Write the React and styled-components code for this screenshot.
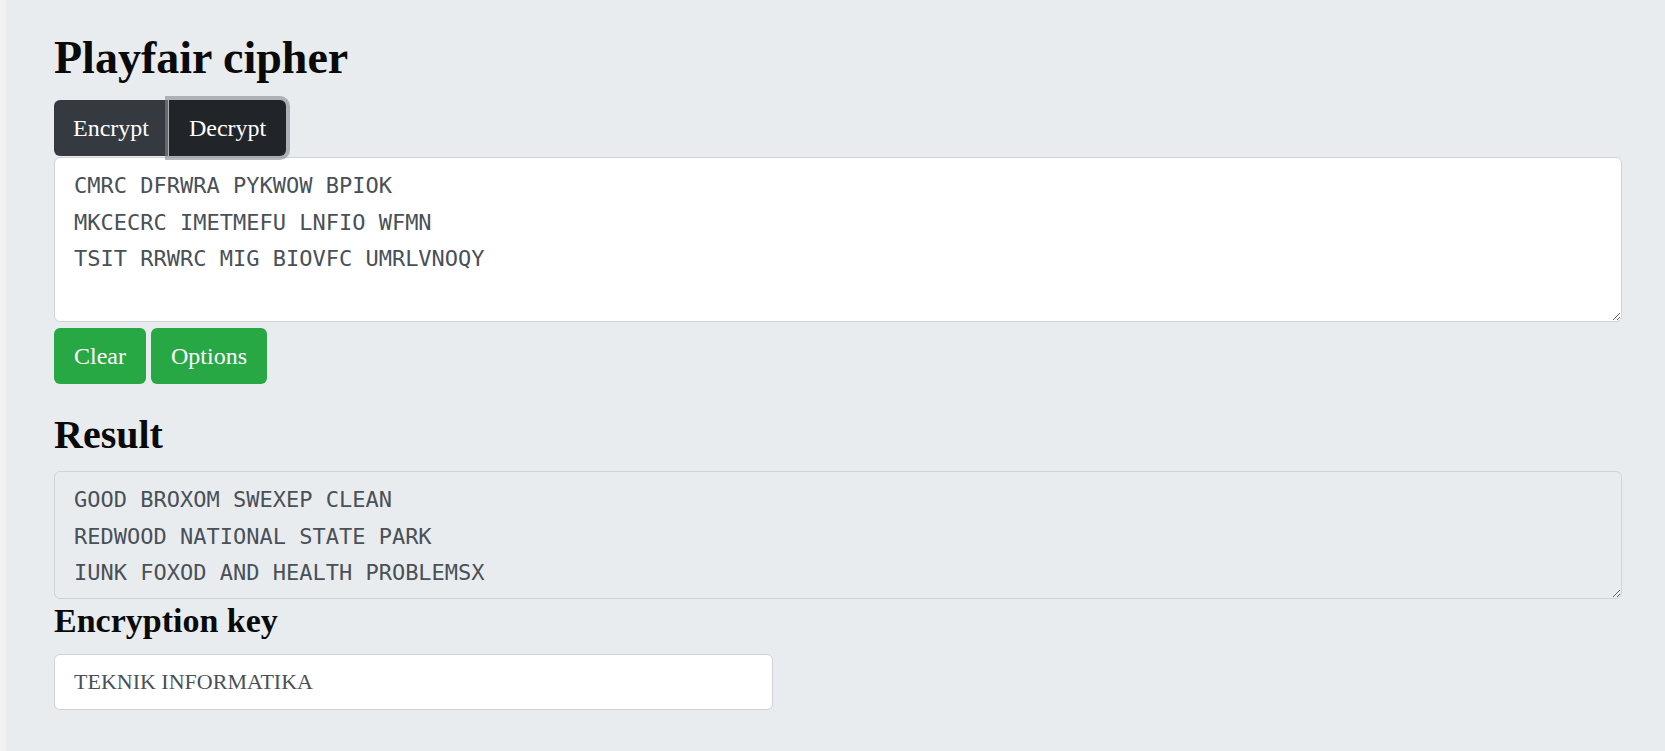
import React, { useState } from "react";
import styled, { createGlobalStyle } from "styled-components";

const GlobalStyles = createGlobalStyle`
  html, body {
    margin: 0;
    padding: 0;
    background: #e9ecef;
  }
  body {
    font-family: "Liberation Serif", "Times New Roman", serif;
    color: #212529;
  }
`;

const Page = styled.div`
  min-height: 751px;
  box-sizing: border-box;
  border-left: 6px solid #f2f2f3;
  padding: 30px 43px 0 48px;
`;

const Title = styled.h1`
  margin: 0 0 15px;
  font-size: 46px;
  line-height: 1.2;
  font-weight: 700;
  color: #0a0a0a;
`;

const SubTitle = styled.h2`
  margin: ${(p) => p.$margin};
  font-size: ${(p) => p.$size}px;
  line-height: 1.2;
  font-weight: 700;
  color: #0a0a0a;
`;

const ButtonGroup = styled.div`
  display: flex;
`;

const ModeButton = styled.button`
  position: relative;
  height: 56px;
  padding: 0 ${(p) => (p.$active ? 20 : 19)}px;
  border: none;
  font-family: inherit;
  font-size: 24px;
  line-height: 1.5;
  color: #fff;
  background: ${(p) => (p.$active ? "#212529" : "#343a40")};
  box-shadow: ${(p) => (p.$active ? "0 0 0 4px rgba(130, 138, 145, 0.6)" : "none")};
  z-index: ${(p) => (p.$active ? 2 : 1)};
  cursor: pointer;

  &:first-child {
    border-radius: 6px 0 0 6px;
  }
  &:last-child {
    border-radius: 0 6px 6px 0;
    margin-left: 1px;
  }
`;

const TextBox = styled.textarea`
  display: block;
  width: 100%;
  height: ${(p) => p.$height}px;
  box-sizing: border-box;
  margin: ${(p) => p.$margin || "0"};
  padding: 10px 19px;
  border: 1px solid #ced4da;
  border-radius: 6px;
  background: ${(p) => (p.readOnly ? "#e9ecef" : "#fff")};
  font-family: "DejaVu Sans Mono", "Liberation Mono", monospace;
  font-size: 22px;
  line-height: 36.6px;
  color: #495057;
  outline: none;
  overflow: hidden;
`;

const ActionRow = styled.div`
  display: flex;
  gap: 5px;
  margin-top: 6px;
`;

const ActionButton = styled.button`
  height: 56px;
  padding: 0 20px;
  border: none;
  border-radius: 6px;
  background: #28a745;
  color: #fff;
  font-family: inherit;
  font-size: 24px;
  line-height: 1.5;
  cursor: pointer;
`;

const KeyInput = styled.input`
  display: block;
  width: 719px;
  height: 56px;
  box-sizing: border-box;
  padding: 0 19px;
  border: 1px solid #ced4da;
  border-radius: 6px;
  background: #fff;
  font-family: "Liberation Serif", "Times New Roman", serif;
  font-size: 22px;
  color: #495057;
  outline: none;
`;

const cipherText = "CMRC DFRWRA PYKWOW BPIOK\nMKCECRC IMETMEFU LNFIO WFMN\nTSIT RRWRC MIG BIOVFC UMRLVNOQY";
const plainText = "GOOD BROXOM SWEXEP CLEAN\nREDWOOD NATIONAL STATE PARK\nIUNK FOXOD AND HEALTH PROBLEMSX";

const App = () => {
  const [mode, setMode] = useState("decrypt");
  const [input, setInput] = useState(cipherText);
  const [key, setKey] = useState("TEKNIK INFORMATIKA");

  return (
    <React.Fragment>
      <GlobalStyles />
      <Page>
        <Title>Playfair cipher</Title>
        <ButtonGroup>
          <ModeButton $active={mode === "encrypt"} onClick={() => setMode("encrypt")}>
            Encrypt
          </ModeButton>
          <ModeButton $active={mode === "decrypt"} onClick={() => setMode("decrypt")}>
            Decrypt
          </ModeButton>
        </ButtonGroup>
        <TextBox $height={165} value={input} onChange={(e) => setInput(e.target.value)} $margin="1px 0 0" />
        <ActionRow>
          <ActionButton onClick={() => setInput("")}>Clear</ActionButton>
          <ActionButton>Options</ActionButton>
        </ActionRow>
        <SubTitle $size={40} $margin="27px 0 12px">Result</SubTitle>
        <TextBox $height={128} readOnly value={plainText} />
        <SubTitle $size={34} $margin="2px 0 12px">Encryption key</SubTitle>
        <KeyInput value={key} onChange={(e) => setKey(e.target.value)} />
      </Page>
    </React.Fragment>
  );
};

export default App;
